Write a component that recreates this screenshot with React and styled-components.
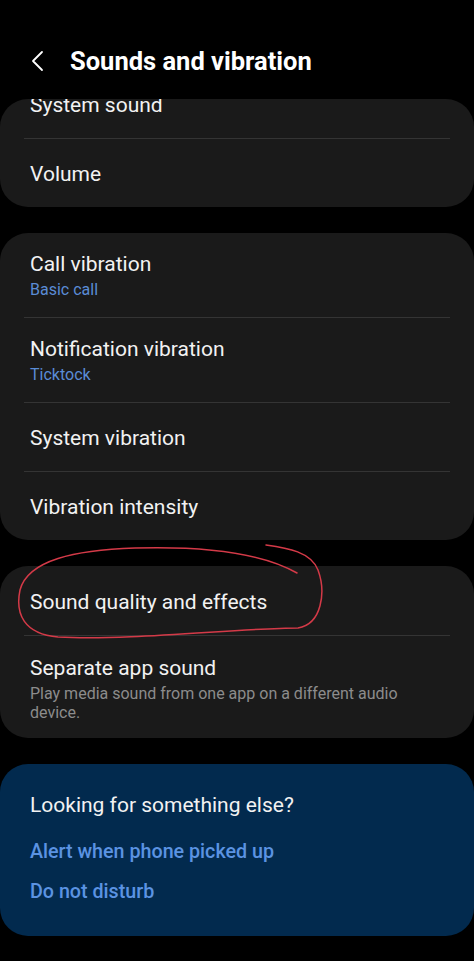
import React from "react";
import styled, { createGlobalStyle } from "styled-components";

const GlobalStyle = createGlobalStyle`
  html, body {
    margin: 0;
    padding: 0;
    background: #000;
  }
  body {
    font-family: Roboto, "Noto Sans", "Liberation Sans", sans-serif;
    -webkit-font-smoothing: antialiased;
  }
`;

const Page = styled.div`
  position: relative;
  width: 474px;
  height: 961px;
  overflow: hidden;
  background: #000;
  display: flex;
  flex-direction: column;
  gap: 26px;
`;

const Header = styled.div`
  height: 99px;
  margin-bottom: -26px;
  display: flex;
  align-items: center;
  padding: 22px 0 0 30px;
  box-sizing: border-box;
`;

const BackButton = styled.button`
  width: 20px;
  height: 24px;
  padding: 0;
  border: 0;
  background: none;
  display: flex;
  align-items: center;
  margin-right: 20px;
`;

const Title = styled.h1`
  margin: 0;
  color: #fff;
  font-size: 25.5px;
  font-weight: 700;
  letter-spacing: 0;
`;

const Card = styled.div`
  background: ${(p) => (p.$accent ? "#022a4e" : "#1a1a1a")};
  border-radius: 28px;
  overflow: hidden;
  display: flex;
  flex-direction: column;
`;

const Row = styled.div`
  height: ${(p) => p.$h || 68}px;
  margin-top: ${(p) => p.$offset || 0}px;
  padding: 2px 30px 0;
  display: flex;
  flex-direction: column;
  justify-content: center;
  box-sizing: border-box;
`;

const Label = styled.div`
  color: #f2f2f2;
  font-size: 21px;
  line-height: 26px;
`;

const Value = styled.div`
  color: #5a8cd6;
  font-size: 16px;
  line-height: 23px;
  margin-top: 1px;
`;

const Desc = styled.div`
  color: #8c8c8c;
  font-size: 16px;
  line-height: 19px;
  margin-top: 3px;
`;

const Divider = styled.div`
  height: 1px;
  margin: 0 24px;
  background: #343434;
`;

const Suggest = styled.div`
  padding: 28px 30px 32px;
  display: flex;
  flex-direction: column;
`;

const SuggestTitle = styled.div`
  color: #f2f2f2;
  font-size: 21px;
  line-height: 26px;
  margin-bottom: 22px;
`;

const Link = styled.a`
  color: #5b93e2;
  font-size: 19.7px;
  font-weight: 500;
  line-height: 24px;
  text-decoration: none;
  & + & {
    margin-top: 16px;
  }
`;

const Scribble = styled.svg`
  position: absolute;
  left: 0;
  top: 0;
  pointer-events: none;
`;

const Chevron = () => (
  <svg width="14" height="22" viewBox="0 0 14 22">
    <path
      d="M12 2 L3 11 L12 20"
      fill="none"
      stroke="#fff"
      strokeWidth="1.8"
      strokeLinecap="round"
      strokeLinejoin="round"
    />
  </svg>
);

const vibration = [
  { label: "Call vibration", value: "Basic call" },
  { label: "Notification vibration", value: "Ticktock" },
  { label: "System vibration" },
  { label: "Vibration intensity" },
];

const App = () => {
  return (
    <>
      <GlobalStyle />
      <Page>
        <Header>
          <BackButton>
            <Chevron />
          </BackButton>
          <Title>Sounds and vibration</Title>
        </Header>

        <Card>
          <Row $offset={-29}>
            <Label>System sound</Label>
          </Row>
          <Divider />
          <Row>
            <Label>Volume</Label>
          </Row>
        </Card>

        <Card>
          {vibration.map((item, i) => (
            <React.Fragment key={item.label}>
              {i > 0 && <Divider />}
              <Row $h={item.value ? 84 : 68}>
                <Label>{item.label}</Label>
                {item.value && <Value>{item.value}</Value>}
              </Row>
            </React.Fragment>
          ))}
        </Card>

        <Card>
          <Row $h={69}>
            <Label>Sound quality and effects</Label>
          </Row>
          <Divider />
          <Row $h={102}>
            <Label>Separate app sound</Label>
            <Desc>Play media sound from one app on a different audio device.</Desc>
          </Row>
        </Card>

        <Card $accent>
          <Suggest>
            <SuggestTitle>Looking for something else?</SuggestTitle>
            <Link>Alert when phone picked up</Link>
            <Link>Do not disturb</Link>
          </Suggest>
        </Card>

        <Scribble width="474" height="961" viewBox="0 0 474 961">
          <path
            d="M297 573 C262 553 205 546 135 548 C75 550 28 560 20 590 C15 614 24 634 58 637 C130 641 240 628 298 628 C322 624 326 592 318 570 C311 552 288 548 266 545"
            fill="none"
            stroke="#d43a48"
            strokeWidth="1.5"
            strokeLinecap="round"
          />
        </Scribble>
      </Page>
    </>
  );
};

export default App;
